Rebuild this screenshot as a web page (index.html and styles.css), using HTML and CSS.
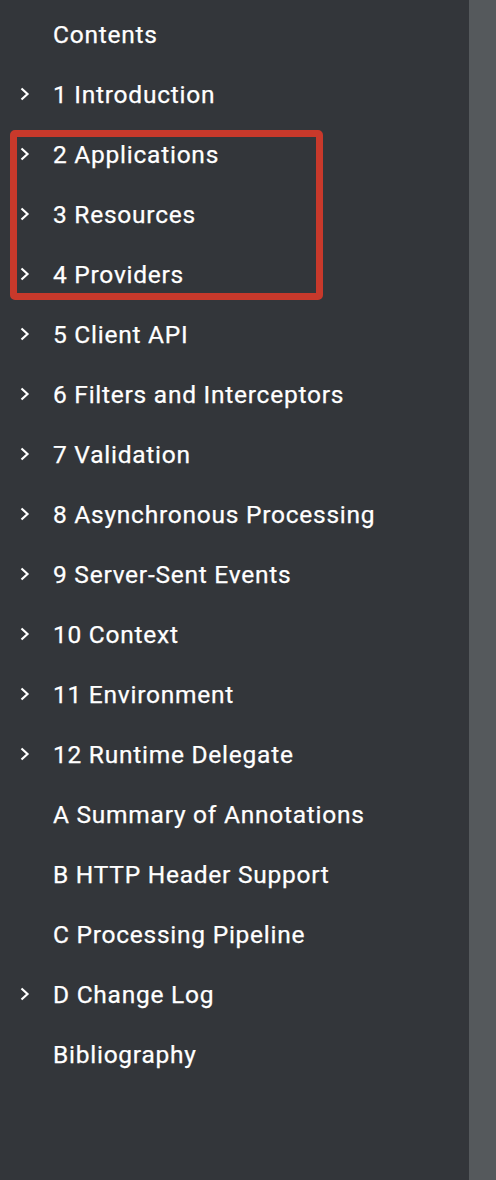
FILE: index.html
```html
<!DOCTYPE html>
<html>
<head>
<meta charset="utf-8">
<link rel="stylesheet" href="styles.css">
</head>
<body>
<div class="layout">
  <nav class="toc">
    <ul class="toc-list">
      <li class="toc-item"><span class="toc-toggle"></span><span class="toc-label">Contents</span></li>
      <li class="toc-item"><span class="toc-toggle"><svg viewBox="0 0 10 14" class="chev"><path d="M1.5 1.5 L7.5 7 L1.5 12.5"/></svg></span><span class="toc-label">1 Introduction</span></li>
      <li class="toc-group">
        <ul class="toc-list">
          <li class="toc-item"><span class="toc-toggle"><svg viewBox="0 0 10 14" class="chev"><path d="M1.5 1.5 L7.5 7 L1.5 12.5"/></svg></span><span class="toc-label">2 Applications</span></li>
          <li class="toc-item"><span class="toc-toggle"><svg viewBox="0 0 10 14" class="chev"><path d="M1.5 1.5 L7.5 7 L1.5 12.5"/></svg></span><span class="toc-label">3 Resources</span></li>
          <li class="toc-item"><span class="toc-toggle"><svg viewBox="0 0 10 14" class="chev"><path d="M1.5 1.5 L7.5 7 L1.5 12.5"/></svg></span><span class="toc-label">4 Providers</span></li>
        </ul>
        <div class="highlight"></div>
      </li>
      <li class="toc-item"><span class="toc-toggle"><svg viewBox="0 0 10 14" class="chev"><path d="M1.5 1.5 L7.5 7 L1.5 12.5"/></svg></span><span class="toc-label">5 Client API</span></li>
      <li class="toc-item"><span class="toc-toggle"><svg viewBox="0 0 10 14" class="chev"><path d="M1.5 1.5 L7.5 7 L1.5 12.5"/></svg></span><span class="toc-label">6 Filters and Interceptors</span></li>
      <li class="toc-item"><span class="toc-toggle"><svg viewBox="0 0 10 14" class="chev"><path d="M1.5 1.5 L7.5 7 L1.5 12.5"/></svg></span><span class="toc-label">7 Validation</span></li>
      <li class="toc-item"><span class="toc-toggle"><svg viewBox="0 0 10 14" class="chev"><path d="M1.5 1.5 L7.5 7 L1.5 12.5"/></svg></span><span class="toc-label">8 Asynchronous Processing</span></li>
      <li class="toc-item"><span class="toc-toggle"><svg viewBox="0 0 10 14" class="chev"><path d="M1.5 1.5 L7.5 7 L1.5 12.5"/></svg></span><span class="toc-label">9 Server-Sent Events</span></li>
      <li class="toc-item"><span class="toc-toggle"><svg viewBox="0 0 10 14" class="chev"><path d="M1.5 1.5 L7.5 7 L1.5 12.5"/></svg></span><span class="toc-label">10 Context</span></li>
      <li class="toc-item"><span class="toc-toggle"><svg viewBox="0 0 10 14" class="chev"><path d="M1.5 1.5 L7.5 7 L1.5 12.5"/></svg></span><span class="toc-label">11 Environment</span></li>
      <li class="toc-item"><span class="toc-toggle"><svg viewBox="0 0 10 14" class="chev"><path d="M1.5 1.5 L7.5 7 L1.5 12.5"/></svg></span><span class="toc-label">12 Runtime Delegate</span></li>
      <li class="toc-item"><span class="toc-toggle"></span><span class="toc-label">A Summary of Annotations</span></li>
      <li class="toc-item"><span class="toc-toggle"></span><span class="toc-label">B HTTP Header Support</span></li>
      <li class="toc-item"><span class="toc-toggle"></span><span class="toc-label">C Processing Pipeline</span></li>
      <li class="toc-item"><span class="toc-toggle"><svg viewBox="0 0 10 14" class="chev"><path d="M1.5 1.5 L7.5 7 L1.5 12.5"/></svg></span><span class="toc-label">D Change Log</span></li>
      <li class="toc-item"><span class="toc-toggle"></span><span class="toc-label">Bibliography</span></li>
    </ul>
  </nav>
  <div class="scrollbar"></div>
</div>
</body>
</html>
```

FILE: styles.css
```css
html, body {
  margin: 0;
  padding: 0;
  height: 100%;
  background: #33363a;
}
.layout {
  display: flex;
  height: 1180px;
}
.toc {
  flex: 1;
  background: #33363a;
  padding-top: 4px;
}
.scrollbar {
  width: 27px;
  background: #55595c;
}
.toc-list {
  list-style: none;
  margin: 0;
  padding: 0;
}
.toc-group {
  position: relative;
}
.highlight {
  position: absolute;
  left: 10px;
  top: 6px;
  width: 313px;
  height: 170px;
  box-sizing: border-box;
  border: 7px solid #c8392b;
  border-radius: 5px;
  pointer-events: none;
}
.toc-item {
  display: flex;
  align-items: center;
  height: 60px;
  font-family: Roboto, "Liberation Sans", sans-serif;
  font-size: 24.5px;
  letter-spacing: 0.75px;
  color: #ffffff;
  -webkit-text-stroke: 0.25px #ffffff;
}
.toc-toggle {
  width: 53px;
  flex: none;
  display: flex;
  align-items: center;
  padding-left: 20px;
  box-sizing: border-box;
}
.chev {
  width: 10px;
  height: 14px;
  fill: none;
  stroke: #ffffff;
  stroke-width: 2.2;
}
.toc-label {
  white-space: nowrap;
}
```
